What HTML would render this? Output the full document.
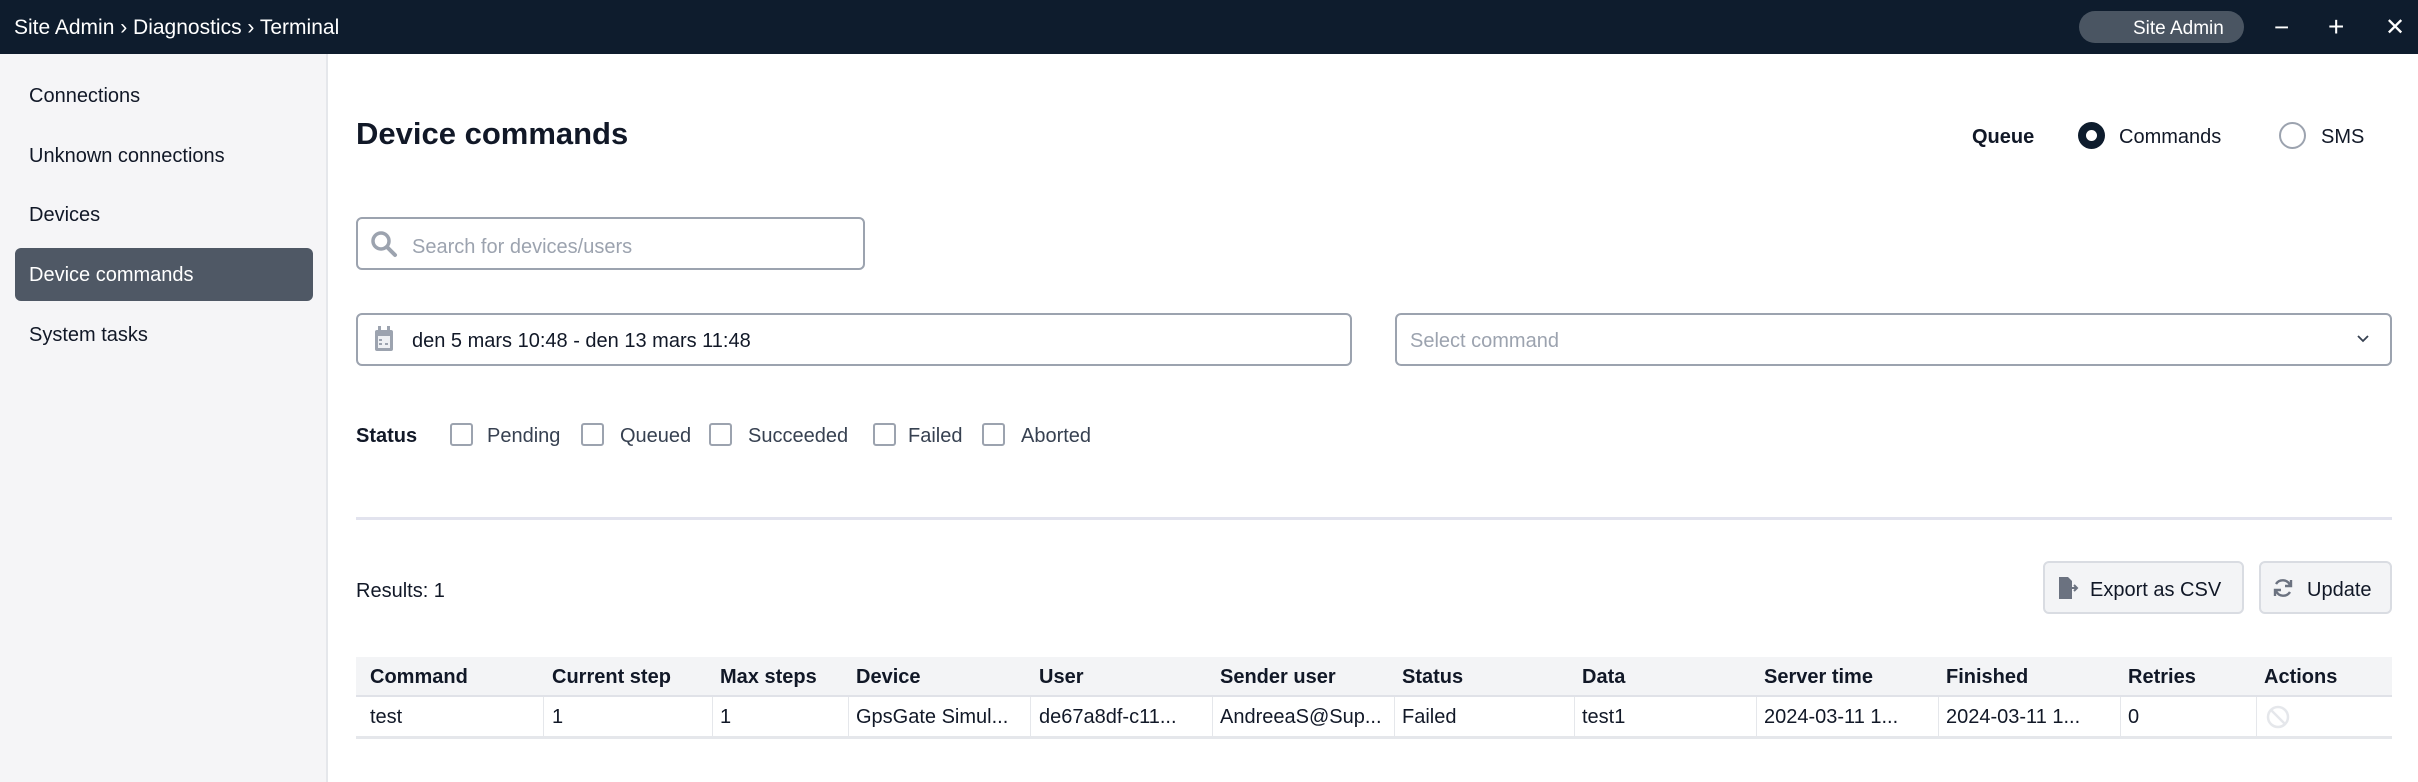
<!DOCTYPE html>
<html><head><meta charset="utf-8"><style>
*{box-sizing:border-box;margin:0;padding:0}
body{width:2418px;height:782px;overflow:hidden;background:#fff;font-family:"Liberation Sans",sans-serif;color:#111827;font-size:20px;position:relative}
.a{position:absolute;white-space:nowrap}
.t{margin-top:2px}
.top{left:0;top:0;width:2418px;height:54px;background:#0e1c2d}
.side{left:0;top:54px;width:328px;height:728px;background:#f5f5f7;border-right:2px solid #e5e7eb}
.nav{left:29px;font-size:20px;color:#111827;margin-top:2px}
.box{border:2px solid #9ca3af;border-radius:6px;background:#fff}
.cb{width:23px;height:23px;border:2px solid #9ca3af;border-radius:3px;top:423px}
.cl{top:423px;color:#374151;margin-top:2px}
.btn{border:2px solid #d9dce2;border-radius:6px;background:#f3f4f6;top:561px;height:53px;font-size:20px}
.th{top:664px;font-weight:bold;font-size:20px;margin-top:2px}
.td{top:704px;font-size:20px;margin-top:2px}
.vl{top:697px;width:1px;height:40px;background:#e5e7eb}
</style></head><body>
<div class="a top"></div>
<div class="a t" style="left:14px;top:14px;color:#fff;font-size:21px">Site Admin › Diagnostics › Terminal</div>
<div class="a" style="left:2079px;top:11px;width:165px;height:32px;border-radius:16px;background:#4a5562"></div>
<div class="a t" style="left:2133px;top:16px;color:#fff;font-size:19px">Site Admin</div>
<div class="a" style="left:2274px;top:12px;color:#fff;font-size:26px">−</div>
<div class="a" style="left:2328px;top:11px;color:#fff;font-size:28px">+</div>
<div class="a" style="left:2385px;top:13px;color:#fff;font-size:24px">✕</div>

<div class="a side"></div>
<div class="a nav" style="top:83px">Connections</div>
<div class="a nav" style="top:143px">Unknown connections</div>
<div class="a nav" style="top:202px">Devices</div>
<div class="a" style="left:15px;top:248px;width:298px;height:53px;border-radius:6px;background:#4f5865"></div>
<div class="a nav" style="top:262px;color:#fff">Device commands</div>
<div class="a nav" style="top:322px">System tasks</div>

<div class="a t" style="left:356px;top:114px;font-size:31px;font-weight:bold">Device commands</div>
<div class="a t" style="left:1972px;top:124px;font-weight:bold">Queue</div>
<div class="a" style="left:2078px;top:122px;width:27px;height:27px;border-radius:50%;background:#0e1c2d"></div>
<div class="a" style="left:2086px;top:130px;width:11px;height:11px;border-radius:50%;background:#fff"></div>
<div class="a t" style="left:2119px;top:124px">Commands</div>
<div class="a" style="left:2279px;top:122px;width:27px;height:27px;border-radius:50%;border:2px solid #9ca3af"></div>
<div class="a t" style="left:2321px;top:124px">SMS</div>

<div class="a box" style="left:356px;top:217px;width:509px;height:53px"></div>
<svg class="a" style="left:370px;top:230px" width="28" height="28" viewBox="0 0 28 28"><circle cx="11" cy="11" r="8" fill="none" stroke="#9ca3af" stroke-width="3.5"/><line x1="17" y1="17" x2="25" y2="25" stroke="#9ca3af" stroke-width="4" stroke-linecap="round"/></svg>
<div class="a t" style="left:412px;top:234px;color:#9ca3af">Search for devices/users</div>

<div class="a box" style="left:356px;top:313px;width:996px;height:53px"></div>
<svg class="a" style="left:373px;top:325px" width="22" height="28" viewBox="0 0 22 28"><rect x="2" y="5" width="18" height="21" rx="2" fill="#9ca3af"/><rect x="5" y="11" width="12" height="12" fill="#eef0f3"/><rect x="5" y="1" width="3" height="6" fill="#9ca3af"/><rect x="14" y="1" width="3" height="6" fill="#9ca3af"/><rect x="6" y="14" width="3" height="2" fill="#9ca3af"/><rect x="6" y="18" width="3" height="2" fill="#9ca3af"/><rect x="12" y="18" width="3" height="2" fill="#9ca3af"/></svg>
<div class="a t" style="left:412px;top:328px">den 5 mars 10:48 - den 13 mars 11:48</div>
<div class="a box" style="left:1395px;top:313px;width:997px;height:53px"></div>
<div class="a t" style="left:1410px;top:328px;color:#9ca3af">Select command</div>
<svg class="a" style="left:2356px;top:334px" width="14" height="10" viewBox="0 0 14 10"><path d="M2 2 L7 7 L12 2" fill="none" stroke="#374151" stroke-width="1.8"/></svg>

<div class="a t" style="left:356px;top:423px;font-weight:bold">Status</div>
<div class="a cb" style="left:450px"></div><div class="a cl" style="left:487px">Pending</div>
<div class="a cb" style="left:581px"></div><div class="a cl" style="left:620px">Queued</div>
<div class="a cb" style="left:709px"></div><div class="a cl" style="left:748px">Succeeded</div>
<div class="a cb" style="left:873px"></div><div class="a cl" style="left:908px">Failed</div>
<div class="a cb" style="left:982px"></div><div class="a cl" style="left:1021px">Aborted</div>

<div class="a" style="left:356px;top:517px;width:2036px;height:3px;background:#e2e3ee"></div>

<div class="a t" style="left:356px;top:578px">Results: 1</div>
<div class="a btn" style="left:2043px;width:201px"></div>
<svg class="a" style="left:2057px;top:576px" width="22" height="24" viewBox="0 0 22 24"><path d="M2 1 H11 L15 5 V23 H2 Z" fill="#6b7280"/><path d="M13 12 H20 M17 9 L20 12 L17 15" fill="none" stroke="#6b7280" stroke-width="2"/></svg>
<div class="a t" style="left:2090px;top:577px">Export as CSV</div>
<div class="a btn" style="left:2259px;width:133px"></div>
<svg class="a" style="left:2272px;top:577px" width="22" height="22" viewBox="0 0 22 22"><path d="M18 8 A8 8 0 0 0 4 7 M4 14 A8 8 0 0 0 18 15" fill="none" stroke="#6b7280" stroke-width="2.4"/><path d="M19 3 V9 H13 M3 19 V13 H9" fill="none" stroke="#6b7280" stroke-width="2.4"/></svg>
<div class="a t" style="left:2307px;top:577px">Update</div>

<div class="a" style="left:356px;top:657px;width:2036px;height:40px;background:#f3f4f6;border-bottom:2px solid #e0e2e8"></div>
<div class="a" style="left:356px;top:736px;width:2036px;height:3px;background:#e5e7eb"></div>
<div class="a th" style="left:370px">Command</div>
<div class="a th" style="left:552px">Current step</div>
<div class="a th" style="left:720px">Max steps</div>
<div class="a th" style="left:856px">Device</div>
<div class="a th" style="left:1039px">User</div>
<div class="a th" style="left:1220px">Sender user</div>
<div class="a th" style="left:1402px">Status</div>
<div class="a th" style="left:1582px">Data</div>
<div class="a th" style="left:1764px">Server time</div>
<div class="a th" style="left:1946px">Finished</div>
<div class="a th" style="left:2128px">Retries</div>
<div class="a th" style="left:2264px">Actions</div>
<div class="a vl" style="left:543px"></div><div class="a vl" style="left:712px"></div><div class="a vl" style="left:848px"></div><div class="a vl" style="left:1030px"></div><div class="a vl" style="left:1212px"></div><div class="a vl" style="left:1394px"></div><div class="a vl" style="left:1574px"></div><div class="a vl" style="left:1756px"></div><div class="a vl" style="left:1938px"></div><div class="a vl" style="left:2120px"></div><div class="a vl" style="left:2256px"></div>
<div class="a td" style="left:370px">test</div>
<div class="a td" style="left:552px">1</div>
<div class="a td" style="left:720px">1</div>
<div class="a td" style="left:856px">GpsGate Simul...</div>
<div class="a td" style="left:1039px">de67a8df-c11...</div>
<div class="a td" style="left:1220px">AndreeaS@Sup...</div>
<div class="a td" style="left:1402px">Failed</div>
<div class="a td" style="left:1582px">test1</div>
<div class="a td" style="left:1764px">2024-03-11 1...</div>
<div class="a td" style="left:1946px">2024-03-11 1...</div>
<div class="a td" style="left:2128px">0</div>
<svg class="a" style="left:2266px;top:705px" width="24" height="24" viewBox="0 0 24 24"><circle cx="12" cy="12" r="10" fill="none" stroke="#e5e7eb" stroke-width="2.5"/><line x1="5" y1="5" x2="19" y2="19" stroke="#e5e7eb" stroke-width="2.5"/></svg>
</body></html>
